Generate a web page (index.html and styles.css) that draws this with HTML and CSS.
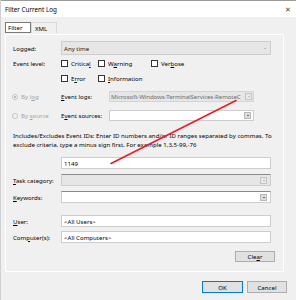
FILE: index.html
```html
<!DOCTYPE html>
<html lang="en">
<head>
    <meta charset="UTF-8">
    <title>Filter Current Log</title>
    <link rel="stylesheet" href="styles.css">
</head>
<body>

    <div class="titlebar">
        <span>Filter Current Log</span>
        <span class="close">&#x2715;</span>
    </div>

    <div class="tabs">
        <div class="tab active">Filter</div>
        <div class="tab">XML</div>
    </div>

    <div class="panel">
        <div class="row logged">
            <span class="label">Lo<u>g</u>ged:</span>
            <div class="combo disabled">Any time<span class="caret"></span></div>
        </div>

        <div class="row levels">
            <span class="label">Event level:</span>
            <div class="checks">
                <label class="check"><span class="box"></span><span>Critica<u>l</u></span></label>
                <label class="check"><span class="box"></span><span>W<u>a</u>rning</span></label>
                <label class="check"><span class="box"></span><span>Ver<u>b</u>ose</span></label>
                <label class="check"><span class="box"></span><span>E<u>r</u>ror</span></label>
                <label class="check"><span class="box"></span><span><u>I</u>nformation</span></label>
            </div>
        </div>

        <div class="row source logs">
            <label class="radio"><span class="dot checked"></span><span>By l<u>o</u>g</span></label>
            <div class="pick">
                <span><u>E</u>vent logs:</span>
                <div class="combo disabled grey"><span class="value">Microsoft-Windows-TerminalServices-RemoteC</span><span class="arrow"><i></i></span></div>
            </div>
        </div>

        <div class="row source sources">
            <label class="radio"><span class="dot"></span><span>By <u>s</u>ource</span></label>
            <div class="pick">
                <span>E<u>v</u>ent sources:</span>
                <div class="combo"><span class="arrow dark"><i></i></span></div>
            </div>
        </div>

        <p class="hint">Includes/Excludes Event IDs: Enter ID numbers and/or ID ranges separated by commas. To<br>exclude criteria, type a minus sign first. For example 1,3,5-99,-76</p>

        <div class="row ids">
            <span class="label"></span>
            <div class="field">1149</div>
        </div>

        <div class="row task">
            <span class="label"><u>T</u>ask category:</span>
            <div class="combo disabled edge"><span class="arrow"><i></i></span></div>
        </div>

        <div class="row keywords">
            <span class="label"><u>K</u>eywords:</span>
            <div class="combo edge"><span class="arrow dark"><i></i></span></div>
        </div>

        <div class="row user">
            <span class="label"><u>U</u>ser:</span>
            <div class="field">&lt;All Users&gt;</div>
        </div>

        <div class="row computer">
            <span class="label">Com<u>p</u>uter(s):</span>
            <div class="field">&lt;All Computers&gt;</div>
        </div>

        <div class="panel-actions">
            <button class="btn">Cle<u>a</u>r</button>
        </div>
    </div>

    <div class="footer">
        <button class="btn default">OK</button>
        <button class="btn">Cancel</button>
    </div>

    <!-- red annotation stroke drawn over the dialog -->
    <svg class="mark" width="296" height="300" viewBox="0 0 296 300">
        <line x1="235" y1="100.5" x2="110" y2="163.5" stroke="#ec1c24" stroke-width="1.6" stroke-linecap="round"/>
    </svg>

</body>
</html>
```

FILE: styles.css
```css
html, body {
    margin: 0;
    padding: 0;
}

body {
    width: 296px;
    height: 300px;
    overflow: hidden;
    position: relative;
    background-color: #f0f0f0;
    font-family: 'Noto Sans', 'Open Sans', sans-serif;
    font-size: 6.1px;
    color: #000;
    border-left: 1px solid #d0d0d0;
    box-sizing: border-box;
}

u {
    text-decoration-thickness: 0.5px;
    text-underline-offset: 1px;
}

.titlebar {
    height: 17px;
    box-sizing: border-box;
    background-color: #fff;
    border-top: 1px solid #9a9a9a;
    display: flex;
    justify-content: space-between;
    align-items: center;
    padding: 0 5px 0 4px;
    font-size: 6.3px;
}

.close {
    font-size: 7px;
    color: #444;
}

.tabs {
    display: flex;
    padding: 5px 0 0 4px;
    height: 11px;
}

.tab {
    width: 26px;
    height: 11px;
    box-sizing: border-box;
    display: flex;
    align-items: center;
    padding-left: 3px;
    border: 1px solid #dadada;
    border-bottom: none;
}

.tab.active {
    background-color: #fff;
    border: 1px solid #7a7a7a;
    padding-left: 2px;
}

.panel {
    margin: 1px 12px 0 4px;
    height: 238px;
    box-sizing: border-box;
    border: 1px solid #fff;
    padding: 6px 12px 0 7px;
}

.row {
    display: grid;
    grid-template-columns: 48px 1fr;
    align-items: center;
}

.combo, .field {
    box-sizing: border-box;
    border: 1px solid #cdcdcd;
    background-color: #fff;
    display: flex;
    align-items: center;
    padding-left: 2px;
    white-space: nowrap;
    overflow: hidden;
}

.combo.disabled {
    background-color: #e6e6e6;
    color: #222;
}

.combo.grey {
    color: #6d6d6d;
    border-color: #d4d4d4;
    padding-left: 1px;
}

.combo .value {
    overflow: hidden;
    letter-spacing: -0.08px;
}

.combo.edge {
    border-top-color: #8a8a8a;
}

.logged .combo {
    height: 14px;
}

.caret {
    margin-left: auto;
    margin-right: 4px;
    width: 0;
    height: 0;
    border-left: 1.5px solid transparent;
    border-right: 1.5px solid transparent;
    border-top: 1.5px solid #8a8a8a;
}

.arrow {
    margin-left: auto;
    margin-right: 2px;
    width: 7px;
    height: 7px;
    box-sizing: border-box;
    border: 1px solid #c4c4c4;
    background-color: #e8e8e8;
    display: flex;
    justify-content: center;
    align-items: center;
    flex-shrink: 0;
}

.grey .arrow {
    margin-right: 1px;
}

.arrow i {
    width: 0;
    height: 0;
    border-left: 1.5px solid transparent;
    border-right: 1.5px solid transparent;
    border-top: 1.5px solid #9a9a9a;
}

.arrow.dark {
    border-color: #b8b8b8;
    background-color: #dcdcdc;
}

.arrow.dark i {
    border-top-color: #000;
}

.levels {
    margin-top: 4px;
    align-items: start;
}

.levels .label {
    line-height: 9px;
}

.checks {
    display: grid;
    grid-template-columns: 37px 53px auto;
    row-gap: 6px;
}

.check {
    display: flex;
    align-items: center;
    gap: 3px;
    height: 9px;
}

.box {
    width: 7px;
    height: 7px;
    box-sizing: border-box;
    border: 1px solid #333;
    background-color: #fff;
}

.logs {
    margin-top: 8px;
}

.sources {
    margin-top: 8px;
}

.radio {
    display: flex;
    align-items: center;
    gap: 3px;
    color: #a3a3a3;
    margin-left: -1px;
}

.dot {
    width: 6px;
    height: 6px;
    box-sizing: border-box;
    border: 1px solid #c4c4c4;
    border-radius: 50%;
    background-color: #f4f4f4;
    display: flex;
    justify-content: center;
    align-items: center;
}

.dot.checked::after {
    content: '';
    width: 2px;
    height: 2px;
    border-radius: 50%;
    background-color: #a8a8a8;
}

.pick {
    display: grid;
    grid-template-columns: 48px 1fr;
    align-items: center;
    margin-right: 17px;
}

.pick .combo {
    height: 11px;
}

.hint {
    margin: 10px 0 0;
    line-height: 9px;
    white-space: nowrap;
}

.ids {
    margin-top: 8px;
}

.ids .field, .user .field, .computer .field {
    height: 12px;
}

.task, .keywords {
    margin-top: 5px;
}

.task .combo, .keywords .combo {
    height: 12px;
}

.task .arrow, .keywords .arrow {
    margin-right: 3px;
}

.user {
    margin-top: 12px;
}

.computer {
    margin-top: 4px;
}

.panel-actions {
    display: flex;
    justify-content: flex-end;
    margin: 8px -4px 0 0;
}

.btn {
    font-family: inherit;
    font-size: 6.1px;
    color: #000;
    background-color: #e1e1e1;
    border: 1px solid #adadad;
    padding: 0;
    height: 11px;
    width: 40px;
    line-height: 9px;
}

.footer {
    display: flex;
    justify-content: flex-end;
    gap: 4px;
    padding: 9px 9px 0 0;
}

.footer .btn {
    height: 12px;
}

.btn.default {
    width: 41px;
    border-color: #0078d7;
}

.mark {
    position: absolute;
    top: 0;
    left: 0;
    pointer-events: none;
}
```
